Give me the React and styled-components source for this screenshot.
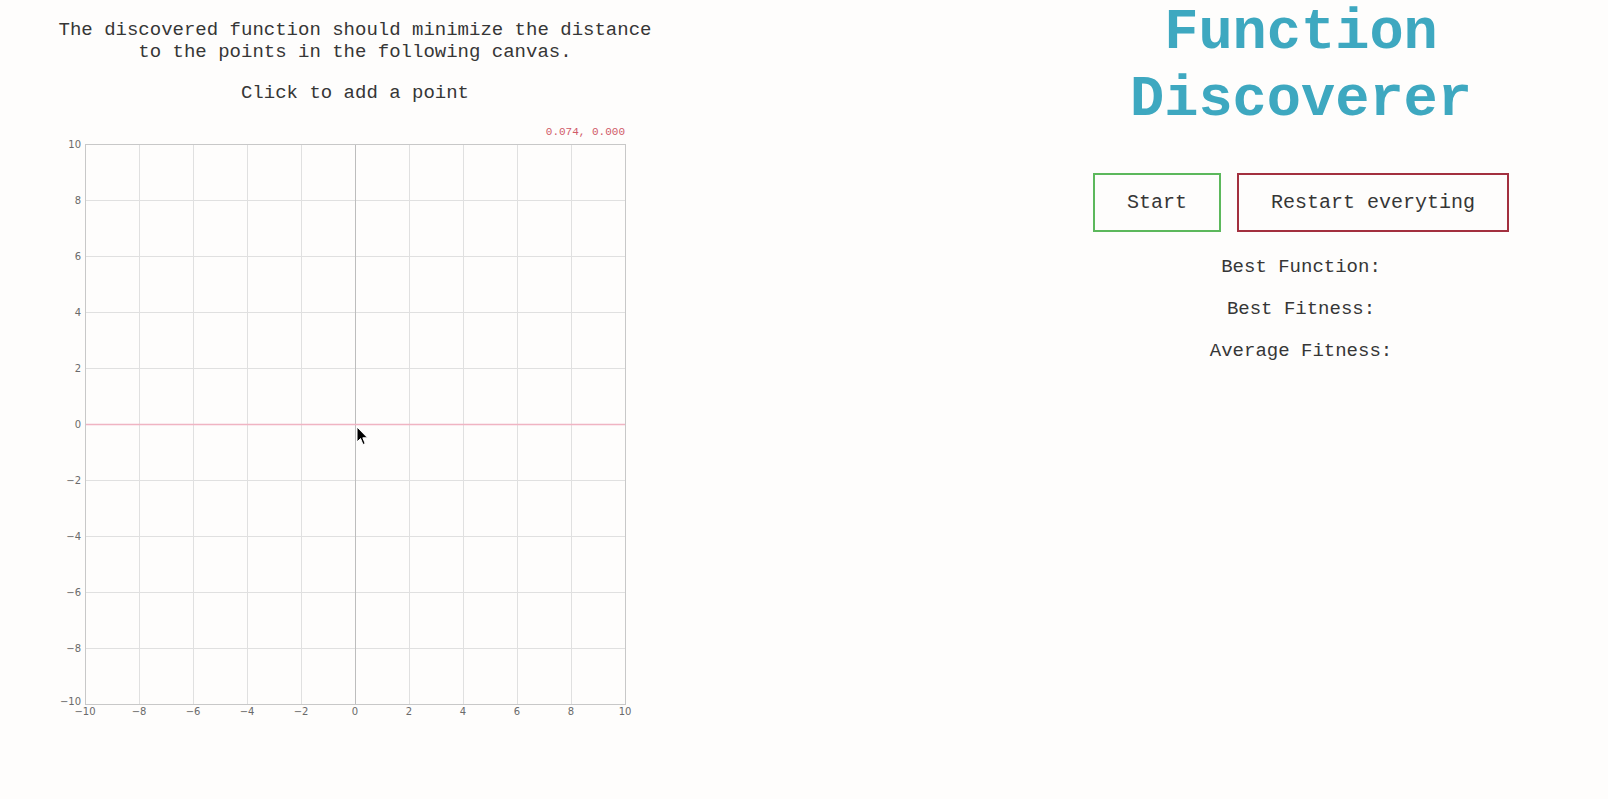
import React from "react";
import styled, { createGlobalStyle } from "styled-components";

const GlobalStyle = createGlobalStyle`
  html, body {
    margin: 0;
    background: #fefdfc;
  }
  body {
    font-family: "Liberation Mono", "Courier New", monospace;
    color: #363636;
  }
`;

const Page = styled.div`
  display: flex;
  align-items: flex-start;
  padding: 0 8px 0 50px;
  min-height: 799px;
  box-sizing: border-box;
`;

const LeftColumn = styled.div`
  width: 610px;
  text-align: center;
  font-size: 19px;
  line-height: 22px;
`;

const Intro = styled.p`
  margin: 19px 0;
`;

const RightColumn = styled.div`
  width: 598px;
  margin-left: auto;
  text-align: center;
`;

const Title = styled.h1`
  margin: 0;
  font-size: 57px;
  line-height: 67px;
  font-weight: bold;
  color: #3ea8c0;
`;

const ButtonRow = styled.div`
  display: flex;
  justify-content: center;
  gap: 16px;
  margin-top: 39px;
`;

const Button = styled.button`
  padding: 16px 32px;
  border: 2px solid ${(p) => p.$tone};
  background: transparent;
  font-family: "Liberation Mono", "Courier New", monospace;
  font-size: 20px;
  line-height: 23px;
  color: #363636;
  cursor: pointer;
`;

const Stats = styled.div`
  padding-top: 4px;
  font-size: 19px;
  line-height: 22px;
`;

const StatLine = styled.p`
  margin: 20px 0;
`;

const GraphWrap = styled.div`
  position: relative;
  width: 600px;
  height: 600px;
  margin: 0 auto;
`;

const Cursor = styled.svg`
  position: absolute;
  left: ${(p) => p.$x}px;
  top: ${(p) => p.$y}px;
  pointer-events: none;
`;

// plot geometry inside the svg
const PLOT = { left: 30, top: 21, width: 540, height: 560 };
const ticks = [-10, -8, -6, -4, -2, 0, 2, 4, 6, 8, 10];
const fmt = (v) => (v < 0 ? `\u2212${-v}` : `${v}`);
const sx = (v) => PLOT.left + ((v + 10) / 20) * PLOT.width;
const sy = (v) => PLOT.top + ((10 - v) / 20) * PLOT.height;

function Graph() {
  const right = PLOT.left + PLOT.width;
  const bottom = PLOT.top + PLOT.height;
  return (
    <GraphWrap>
      <svg width="600" height="600">
        <g stroke="#e0e0e0" strokeWidth="1">
          {ticks.map((t) => (
            <line key={`v${t}`} x1={sx(t) + 0.5} x2={sx(t) + 0.5} y1={PLOT.top} y2={bottom} />
          ))}
          {ticks.map((t) => (
            <line key={`h${t}`} x1={PLOT.left} x2={right} y1={sy(t) + 0.5} y2={sy(t) + 0.5} />
          ))}
        </g>
        <line x1={sx(0) + 0.5} x2={sx(0) + 0.5} y1={PLOT.top} y2={bottom} stroke="#bdbdbd" />
        <line x1={PLOT.left} x2={right} y1={sy(0) + 0.5} y2={sy(0) + 0.5} stroke="#f0b4c2" strokeWidth="1.5" />
        <rect
          x={PLOT.left + 0.5}
          y={PLOT.top + 0.5}
          width={PLOT.width}
          height={PLOT.height}
          fill="none"
          stroke="#c8c8c8"
        />
        <g fontFamily='"DejaVu Sans", sans-serif' fontSize="10" fill="#6a6a6a">
          {ticks.map((t) => (
            <text
              key={`yl${t}`}
              x={PLOT.left - 4}
              y={sy(t) + (t === -10 ? 1 : 3.5)}
              textAnchor="end"
            >
              {fmt(t)}
            </text>
          ))}
          {ticks.map((t) => (
            <text key={`xl${t}`} x={sx(t)} y={bottom + 11} textAnchor="middle">
              {fmt(t)}
            </text>
          ))}
        </g>
        <text
          x={right}
          y={11.5}
          textAnchor="end"
          fontFamily='"Liberation Mono", monospace'
          fontSize="11"
          fill="#d05a68"
        >
          0.074, 0.000
        </text>
      </svg>
      <Cursor $x={301} $y={303} width="13" height="20" viewBox="0 0 13 20">
        <path
          d="M1 1 L1 16 L4.5 12.5 L7 18.5 L9.2 17.6 L6.8 11.8 L11.5 11.8 Z"
          fill="#000"
          stroke="#fff"
          strokeWidth="1"
          strokeLinejoin="round"
        />
      </Cursor>
    </GraphWrap>
  );
}

export default function App() {
  return (
    <>
      <GlobalStyle />
      <Page>
        <LeftColumn>
          <Intro>
            The discovered function should minimize the distance to the points
            in the following canvas.
          </Intro>
          <Intro>Click to add a point</Intro>
          <Graph />
        </LeftColumn>
        <RightColumn>
          <Title>
            Function
            <br />
            Discoverer
          </Title>
          <ButtonRow>
            <Button $tone="#5cb85c">Start</Button>
            <Button $tone="#a3303f">Restart everyting</Button>
          </ButtonRow>
          <Stats>
            <StatLine>Best Function:</StatLine>
            <StatLine>Best Fitness:</StatLine>
            <StatLine>Average Fitness:</StatLine>
          </Stats>
        </RightColumn>
      </Page>
    </>
  );
}
